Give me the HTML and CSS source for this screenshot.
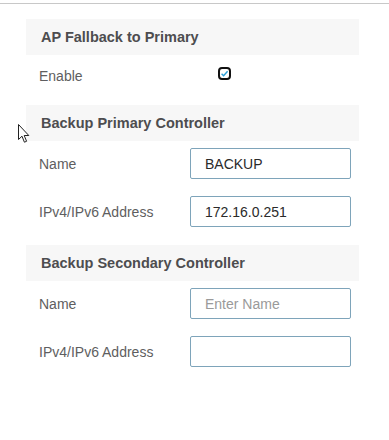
FILE: index.html
```html
<!DOCTYPE html>
<html lang="en">

<head>
    <meta charset="utf-8">
    <meta name="viewport" content="width=device-width, initial-scale=1.0">
    <title>AP Fallback</title>

    <link rel="stylesheet" href="styles.css">

</head>

<body>

    <div class="topline"></div>

    <main>
        <section class="blok">
            <h2>AP Fallback to Primary</h2>
            <div class="enable">
                <span class="label lbl-wide">Enable</span>
                <span class="check">
                    <svg width="13" height="13" viewBox="0 0 13 13">
                        <rect x="1" y="1" width="11" height="11" rx="3" fill="#fff" stroke="#111" stroke-width="2" />
                        <path d="M3.6 6.8 L5.6 8.8 L9.6 4.2" fill="none" stroke="#2a9fd8" stroke-width="1.4" />
                    </svg>
                </span>
            </div>
        </section>

        <section class="blok">
            <h2>Backup Primary Controller</h2>
            <div class="felter">
                <div class="raekke">
                    <label class="label">Name</label>
                    <input type="text" value="BACKUP">
                </div>
                <div class="raekke">
                    <label class="label">IPv4/IPv6 Address</label>
                    <input type="text" value="172.16.0.251">
                </div>
            </div>
        </section>

        <section class="blok">
            <h2>Backup Secondary Controller</h2>
            <div class="felter">
                <div class="raekke">
                    <label class="label">Name</label>
                    <input type="text" placeholder="Enter Name">
                </div>
                <div class="raekke">
                    <label class="label">IPv4/IPv6 Address</label>
                    <input type="text">
                </div>
            </div>
        </section>
    </main>

    <svg class="cursor" width="13" height="20" viewBox="0 0 13 20">
        <path d="M0.5 0.5 L0.5 15.5 L4 12.2 L6.4 18.2 L8.6 17.3 L6.2 11.5 L10.8 11.5 Z" fill="#fff" stroke="#222" stroke-width="1" />
    </svg>

</body>

</html>
```

FILE: styles.css
```css
body {
    margin: 0;
    font-family: "Liberation Sans", Arial, sans-serif;
    background: #fff;
    position: relative;
}

.topline {
    margin-top: 3px;
    height: 1px;
    background-color: #c8c8c8;
}

main {
    width: 333px;
    margin-left: 26px;
    padding-top: 15px;
}

h2 {
    margin: 0;
    height: 36px;
    line-height: 36px;
    padding-left: 15px;
    font-size: 14.5px;
    font-weight: bold;
    color: #4d4d4f;
    background-color: #f7f7f7;
}

.label {
    display: inline-block;
    width: 151px;
    padding-left: 13px;
    font-size: 14px;
    color: #5e5e60;
}

.lbl-wide {
    width: 179px;
}

.enable {
    height: 42px;
    margin-bottom: 8px;
    display: flex;
    align-items: center;
}

.check {
    display: flex;
    margin-top: -5px;
}

.felter {
    padding: 7px 0 18px;
    display: flex;
    flex-direction: column;
    gap: 17px;
}

.raekke {
    display: flex;
    align-items: center;
}

input {
    box-sizing: border-box;
    width: 161px;
    height: 31px;
    padding: 0 14px;
    border: 1px solid #7ea4ba;
    border-radius: 2px;
    font-family: "Liberation Sans", Arial, sans-serif;
    font-size: 14px;
    color: #2a2a2a;
    outline: none;
}

input::placeholder {
    color: #9a9a9a;
}

.cursor {
    position: absolute;
    left: 18px;
    top: 124px;
}
```
